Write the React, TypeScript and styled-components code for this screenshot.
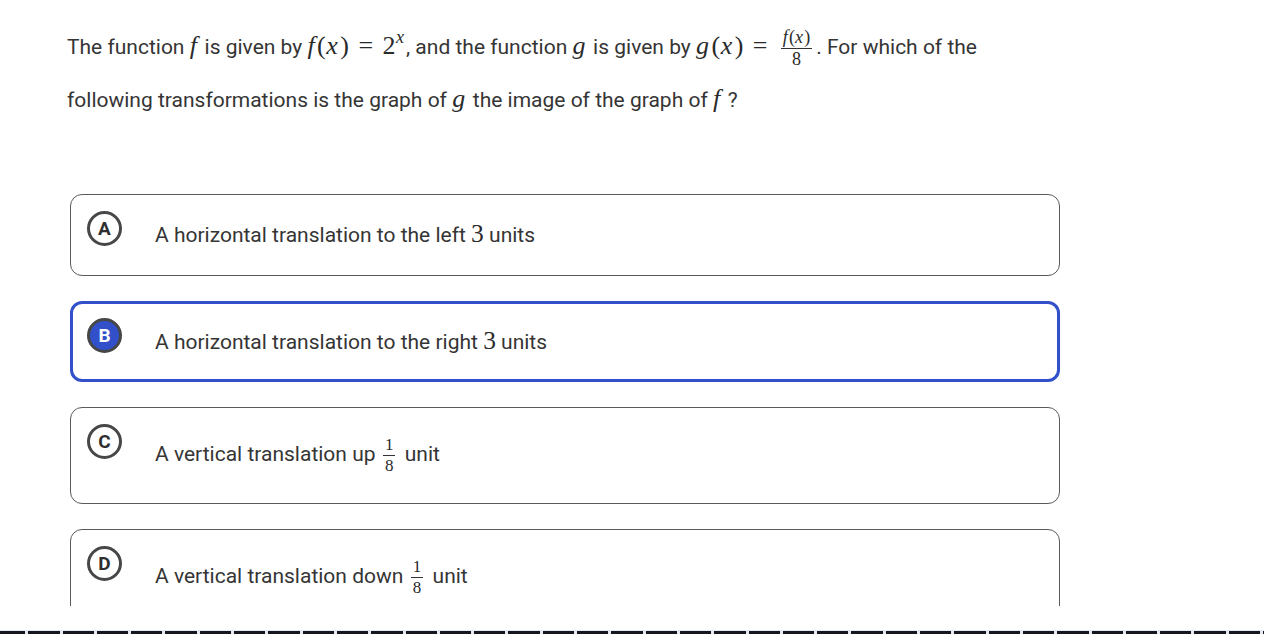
import React from "react";
import styled, { createGlobalStyle } from "styled-components";

const Global = createGlobalStyle`
  html, body { margin: 0; padding: 0; background: #ffffff; overflow: hidden; }
  #root { height: 100vh; }
`;

const Page = styled.div`
  height: 100vh;
  display: flex;
  flex-direction: column;
  overflow: hidden;
  background: #ffffff;
`;

const Scroller = styled.main`
  flex: 0 0 606px;
  height: 606px;
  overflow: hidden;
  box-sizing: border-box;
  padding: 20px 0 0 67px;
`;

const Spacer = styled.div`
  flex: 0 0 24px;
`;

const Question = styled.p`
  margin: 0;
  width: 975px;
  font-family: Roboto, "Liberation Sans", sans-serif;
  font-size: 21px;
  line-height: 51px;
  color: #353535;
`;

const Math = styled.span`
  font-family: "Liberation Serif", "DejaVu Serif", serif;
  font-size: 26px;
  letter-spacing: 0.6px;
  color: #2a2a2a;
  white-space: nowrap;
`;

const V = styled.i`
  font-style: italic;
  padding-right: 0.07em;
`;

const Op = styled.span`
  margin: 0 0.34em;
`;

const Sup = styled.sup`
  font-size: 0.7em;
  vertical-align: 0.6em;
  line-height: 0;
`;

const Frac = styled.span<{ $size: number }>`
  display: inline-flex;
  flex-direction: column;
  align-items: center;
  vertical-align: middle;
  font-family: "Liberation Serif", "DejaVu Serif", serif;
  font-size: ${(p) => p.$size}px;
  line-height: 1.05;
  padding: 0 0.12em;
  margin: 0 2px;
  color: #2a2a2a;
`;

const Num = styled.span`
  padding: 0 0.1em 1px;
  border-bottom: 1px solid #333;
  align-self: stretch;
  text-align: center;
`;

const Den = styled.span`
  padding-top: 1px;
`;

const Options = styled.div`
  display: flex;
  flex-direction: column;
  gap: 25px;
  margin: 68px 0 0 3px;
  width: 990px;
`;

const Option = styled.div<{ $selected?: boolean }>`
  box-sizing: border-box;
  display: flex;
  align-items: center;
  min-height: ${(p) => (p.$selected ? "81px" : "82px")};
  padding: ${(p) => (p.$selected ? "14px 14px 13px" : "16px 16px")};
  border: ${(p) => (p.$selected ? "3px solid #3150c9" : "1px solid #5a5a5a")};
  border-radius: 12px;
  background: #ffffff;
`;

const Badge = styled.span<{ $selected?: boolean }>`
  align-self: flex-start;
  flex: 0 0 35px;
  width: 35px;
  height: 35px;
  box-sizing: border-box;
  border-radius: 50%;
  border: 3px solid #474747;
  background: ${(p) => (p.$selected ? "#3150c9" : "#ffffff")};
  color: ${(p) => (p.$selected ? "#ffffff" : "#2f2f2f")};
  display: flex;
  align-items: center;
  justify-content: center;
  font-family: Roboto, "Liberation Sans", sans-serif;
  font-weight: 700;
  font-size: 19px;
  line-height: 1;
`;

const OptionText = styled.div`
  margin-left: 33px;
  padding: 8px 0;
  font-family: Roboto, "Liberation Sans", sans-serif;
  font-size: 21px;
  line-height: 32px;
  color: #353535;
`;

const SmallFrac = styled(Frac)`
  padding: 4px 0.1em;
  margin: 0 8px 0 6px;
`;

const Footer = styled.footer`
  flex: 0 0 auto;
  display: flex;
  gap: 3px;
  height: 30px;
  padding-top: 1px;
  margin-left: -6px;
  background: #e4e7f4;
`;

const Segment = styled.span`
  flex: 0 0 31.3px;
  height: 100%;
  background: #15171c;
`;

const MathNum = styled.span`
  font-family: "Liberation Serif", "DejaVu Serif", serif;
  font-size: 25.5px;
  line-height: 0;
  color: #2a2a2a;
`;

type Opt = { letter: string; content: React.ReactNode; selected?: boolean };

const options: Opt[] = [
  {
    letter: "A",
    content: (
      <>
        A horizontal translation to the left <MathNum>3</MathNum> units
      </>
    ),
  },
  {
    letter: "B",
    selected: true,
    content: (
      <>
        A horizontal translation to the right <MathNum>3</MathNum> units
      </>
    ),
  },
  {
    letter: "C",
    content: (
      <>
        A vertical translation up
        <SmallFrac $size={17}>
          <Num>1</Num>
          <Den>8</Den>
        </SmallFrac>
        unit
      </>
    ),
  },
  {
    letter: "D",
    content: (
      <>
        A vertical translation down
        <SmallFrac $size={17}>
          <Num>1</Num>
          <Den>8</Den>
        </SmallFrac>
        unit
      </>
    ),
  },
];

export default function App() {
  return (
    <Page>
      <Global />
      <Scroller>
        <Question>
          The function{" "}
          <Math>
            <V>f</V>
          </Math>{" "}
          is given by{" "}
          <Math>
            <V>f</V>(<V>x</V>)<Op>=</Op>2
            <Sup>
              <V>x</V>
            </Sup>
          </Math>
          , and the function{" "}
          <Math>
            <V>g</V>
          </Math>{" "}
          is given by{" "}
          <Math>
            <V>g</V>(<V>x</V>)<Op>=</Op>
          </Math>
          <Frac $size={18}>
            <Num>
              <V>f</V>(<V>x</V>)
            </Num>
            <Den>8</Den>
          </Frac>
          . For which of the following transformations is the graph of{" "}
          <Math>
            <V>g</V>
          </Math>{" "}
          the image of the graph of{" "}
          <Math>
            <V>f</V>
          </Math>{" "}
          ?
        </Question>
        <Options>
          {options.map((o) => (
            <Option key={o.letter} $selected={o.selected}>
              <Badge $selected={o.selected}>{o.letter}</Badge>
              <OptionText>{o.content}</OptionText>
            </Option>
          ))}
        </Options>
      </Scroller>
      <Spacer />
      <Footer>
        {Array.from({ length: 38 }, (_, i) => (
          <Segment key={i} />
        ))}
      </Footer>
    </Page>
  );
}
